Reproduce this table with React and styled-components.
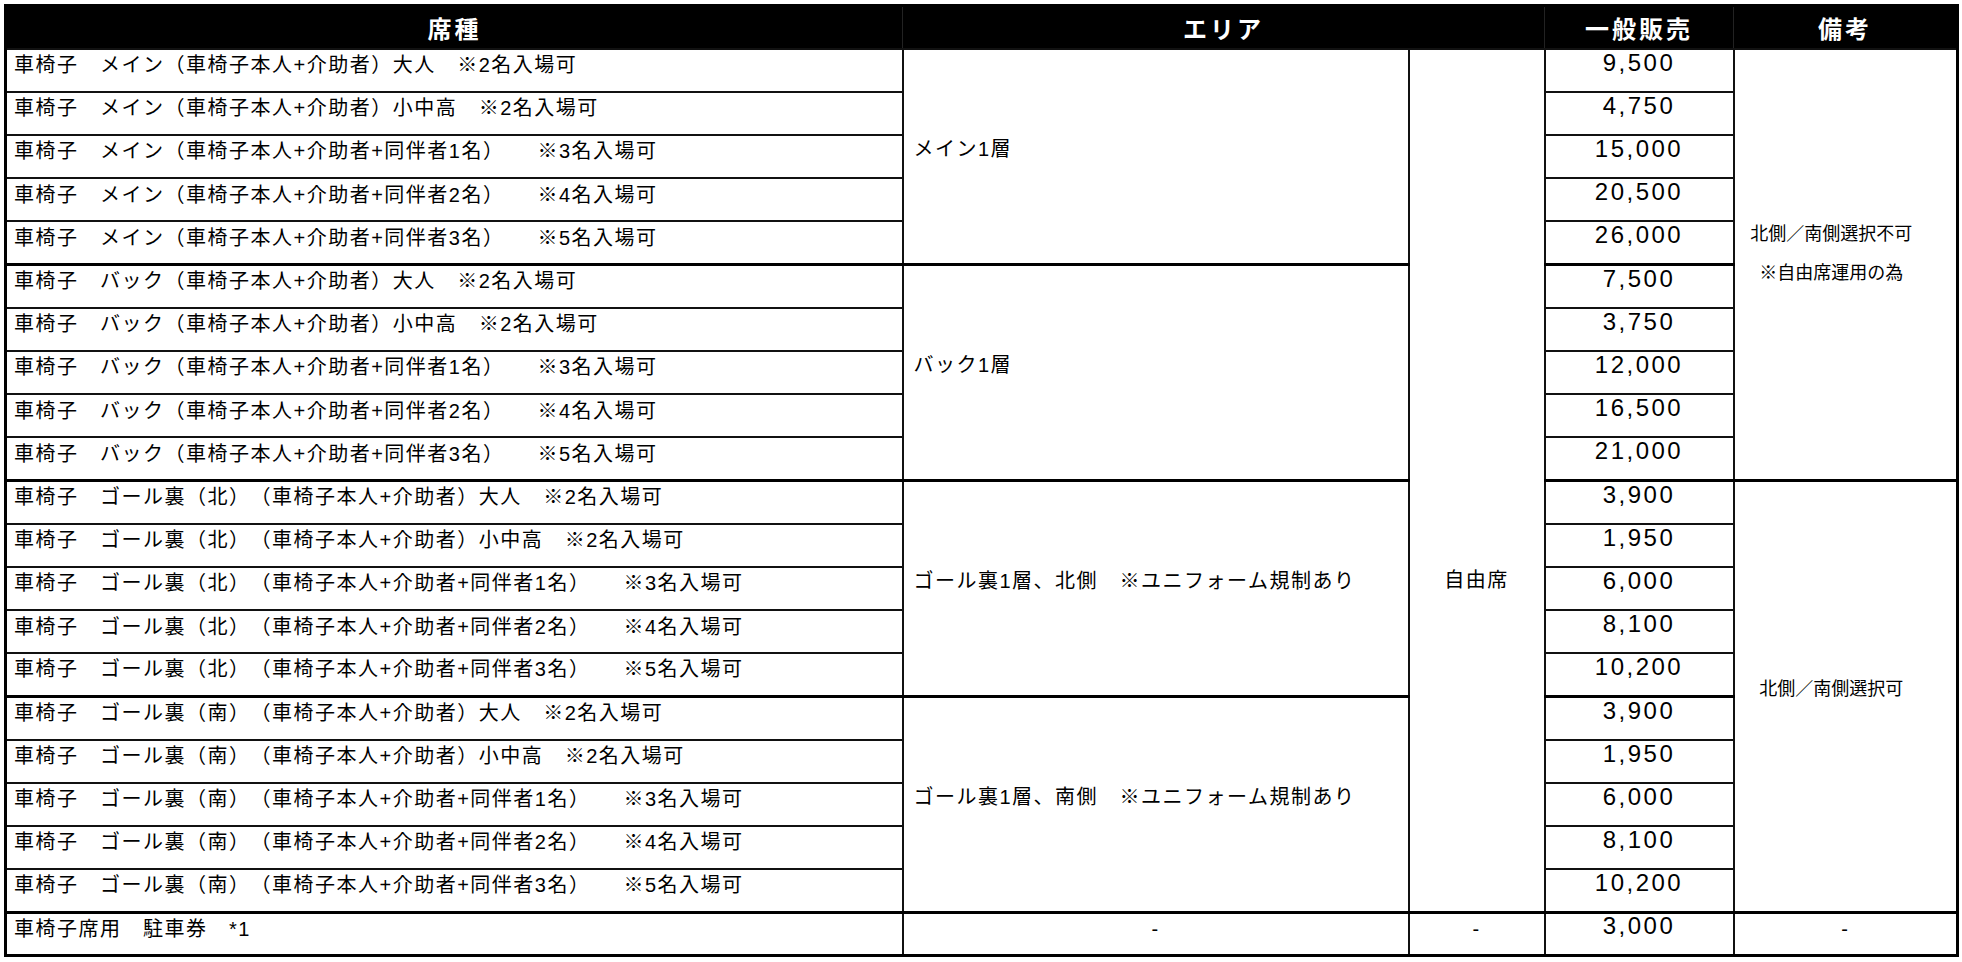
import React from 'react';
import styled, { createGlobalStyle } from 'styled-components';

const GlobalStyle = createGlobalStyle`
	html, body {
		margin: 0;
		padding: 0;
		background: #fff;
	}
	body {
		font-family: "Liberation Sans", "Noto Sans CJK JP", sans-serif;
		color: #000;
		text-spacing-trim: space-all;
	}
`;

const Page = styled.div`
	padding: 4px;
	width: 1962px;
	box-sizing: border-box;
`;

const Table = styled.table`
	border-collapse: collapse;
	table-layout: fixed;
	width: 1952px;
	border: 3px solid #000;
`;

const HeadRow = styled.tr`
	height: 43px;
`;

const HeadCell = styled.th`
	background: #000;
	color: #fff;
	font-size: 24px;
	font-weight: 700;
	letter-spacing: 3px;
	text-align: center;
	vertical-align: middle;
	padding: 0;
	border: 1px solid #222;
	border-top: 3px solid #000;
`;

const Row = styled.tr`
	height: 43.2px;
`;

const Cell = styled.td`
	font-size: 20px;
	letter-spacing: 1.5px;
	line-height: 24px;
	text-align: ${p => p.$align || 'left'};
	vertical-align: middle;
	padding: ${p => p.$top || 0}px 0 ${p => p.$bottom ?? 10}px ${p => p.$left || 0}px;
	border: 2px solid #111;
	border-top: ${p => (p.$thick ? '3px solid #000' : '2px solid #111')};
	white-space: nowrap;
	overflow: hidden;
`;

const Price = styled(Cell)`
	font-size: 24px;
	letter-spacing: 2.5px;
	text-align: center;
	padding-bottom: 15px;
`;

const Remark = styled(Cell)`
	font-size: 18px;
	letter-spacing: 0;
	line-height: 39px;
	text-align: center;
	padding-right: 28px;
`;

const groups = [
	{ name: 'メイン', area: 'メイン1層', prices: ['9,500', '4,750', '15,000', '20,500', '26,000'] },
	{ name: 'バック', area: 'バック1層', prices: ['7,500', '3,750', '12,000', '16,500', '21,000'] },
	{ name: 'ゴール裏（北）', area: 'ゴール裏1層、北側　※ユニフォーム規制あり', prices: ['3,900', '1,950', '6,000', '8,100', '10,200'] },
	{ name: 'ゴール裏（南）', area: 'ゴール裏1層、南側　※ユニフォーム規制あり', prices: ['3,900', '1,950', '6,000', '8,100', '10,200'] }
];

const kinds = [
	'（車椅子本人+介助者）大人　※2名入場可',
	'（車椅子本人+介助者）小中高　※2名入場可',
	'（車椅子本人+介助者+同伴者1名）\u3000\u2002※3名入場可',
	'（車椅子本人+介助者+同伴者2名）\u3000\u2002※4名入場可',
	'（車椅子本人+介助者+同伴者3名）\u3000\u2002※5名入場可'
];

const App = () => {
	return (
		<Page>
			<GlobalStyle />
			<Table>
				<colgroup>
					<col style={{ width: 897 }} />
					<col style={{ width: 506 }} />
					<col style={{ width: 136 }} />
					<col style={{ width: 189 }} />
					<col style={{ width: 224 }} />
				</colgroup>
				<thead>
					<HeadRow>
						<HeadCell>席種</HeadCell>
						<HeadCell colSpan={2}>エリア</HeadCell>
						<HeadCell>一般販売</HeadCell>
						<HeadCell>備考</HeadCell>
					</HeadRow>
				</thead>
				<tbody>
					{groups.map((g, gi) =>
						g.prices.map((price, i) => (
							<Row key={`${gi}-${i}`}>
								<Cell $left={7} $thick={i === 0 && gi > 0}>
									{`車椅子　${g.name}${kinds[i]}`}
								</Cell>
								{i === 0 && (
									<Cell rowSpan={5} $left={10} $thick={gi > 0} $bottom={14}>
										{g.area}
									</Cell>
								)}
								{gi === 0 && i === 0 && (
									<Cell rowSpan={20} $align="center" $top={210}>
										自由席
									</Cell>
								)}
								<Price $thick={i === 0 && gi > 0}>{price}</Price>
								{gi === 0 && i === 0 && (
									<Remark rowSpan={10} $bottom={20}>
										北側／南側選択不可
										<br />
										※自由席運用の為
									</Remark>
								)}
								{gi === 2 && i === 0 && (
									<Remark rowSpan={10} $thick $bottom={14}>
										北側／南側選択可
									</Remark>
								)}
							</Row>
						))
					)}
					<Row>
						<Cell $left={7} $thick>
							車椅子席用　駐車券　*1
						</Cell>
						<Cell $align="center" $thick>
							-
						</Cell>
						<Cell $align="center" $thick>
							-
						</Cell>
						<Price $thick>3,000</Price>
						<Cell $align="center" $thick>
							-
						</Cell>
					</Row>
				</tbody>
			</Table>
		</Page>
	);
};

export default App;
